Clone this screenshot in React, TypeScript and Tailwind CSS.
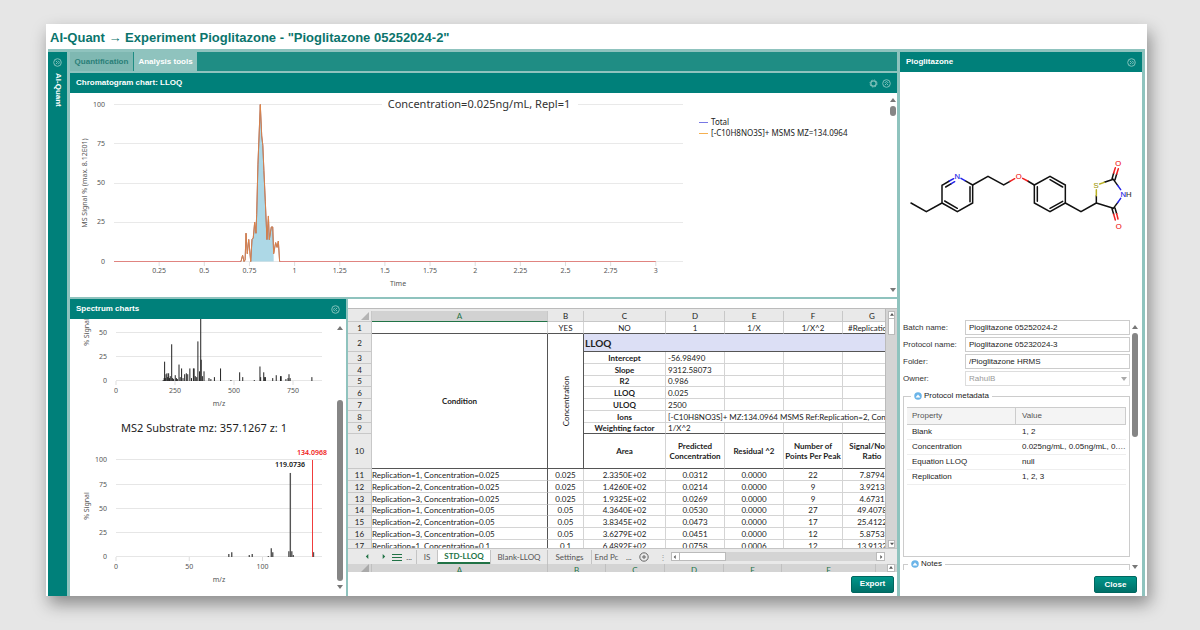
import { useState } from "react";
import type { ReactNode } from "react";
import clsx from "clsx";

type Point = [number, number];

const CHART_FONT = "font-['Noto_Sans',sans-serif]";

// time / signal % of the extracted ion trace
const TRACE: Point[] = [
  [0.703, 0], [0.712, 4], [0.72, 0], [0.726, 1], [0.731, 18], [0.738, 5],
  [0.746, 14], [0.757, 0], [0.764, 14], [0.771, 15], [0.779, 25], [0.786, 18],
  [0.79, 30], [0.797, 62], [0.81, 100], [0.818, 80], [0.824, 74], [0.83, 58],
  [0.838, 38], [0.847, 14], [0.855, 29], [0.86, 14], [0.871, 22], [0.879, 22],
  [0.884, 5], [0.895, 12], [0.903, 9], [0.91, 13], [0.917, 0],
];

const MS1_PEAKS: Point[] = [
  [200, 1], [204, 3], [206, 20], [209, 3], [212, 7], [216, 8], [219, 4], [223, 8], [227, 3],
  [230, 5], [236, 38], [240, 3], [244, 2], [251, 6], [256, 3], [260, 2], [267, 17], [272, 4],
  [278, 13], [284, 3], [291, 7], [298, 8], [304, 7], [313, 13], [320, 3], [328, 13], [331, 13],
  [336, 5], [342, 4], [347, 41], [354, 10], [359, 70], [361, 22], [366, 5], [373, 10],
  [394, 3], [402, 2], [417, 4], [443, 13], [487, 1], [524, 9], [537, 4], [586, 1],
  [610, 15], [613, 4], [626, 9], [630, 4], [633, 4], [664, 3], [679, 6], [697, 5],
  [700, 5], [720, 2], [729, 3], [733, 7], [738, 3], [830, 4],
];

const MS2_PEAKS: Point[] = [
  [77, 3], [79, 5], [91, 2], [93, 3], [104, 1], [106, 9], [107, 5],
  [118, 6], [119, 87], [120, 6], [121, 2], [134.8, 5],
];

const TIME_TICKS = [0.25, 0.5, 0.75, 1, 1.25, 1.5, 1.75, 2, 2.25, 2.5, 2.75, 3];

const FIT_ROWS = [
  { n: 3, h: "h-[12px]", label: "Intercept", value: "-56.98490" },
  { n: 4, h: "h-[12px]", label: "Slope", value: "9312.58073" },
  { n: 5, h: "h-[11px]", label: "R2", value: "0.986" },
  { n: 6, h: "h-[12px]", label: "LLOQ", value: "0.025" },
  { n: 7, h: "h-[12px]", label: "ULOQ", value: "2500" },
  {
    n: 8,
    h: "h-[12px]",
    label: "Ions",
    value: "[-C10H8NO3S]+ MZ:134.0964 MSMS Ref:Replication=2, Concentration=0.025",
  },
  { n: 9, h: "h-[11px]", label: "Weighting factor", value: "1/X^2" },
];

const DATA_ROWS = [
  { n: 11, h: "h-[12px]", cells: ["Replication=1, Concentration=0.025", "0.025", "2.3350E+02", "0.0312", "0.0000", "22", "7.8794"] },
  { n: 12, h: "h-[12px]", cells: ["Replication=2, Concentration=0.025", "0.025", "1.4260E+02", "0.0214", "0.0000", "9", "3.9213"] },
  { n: 13, h: "h-[12px]", cells: ["Replication=3, Concentration=0.025", "0.025", "1.9325E+02", "0.0269", "0.0000", "9", "4.6731"] },
  { n: 14, h: "h-[11px]", cells: ["Replication=1, Concentration=0.05", "0.05", "4.3640E+02", "0.0530", "0.0000", "27", "49.4078"] },
  { n: 15, h: "h-[12px]", cells: ["Replication=2, Concentration=0.05", "0.05", "3.8345E+02", "0.0473", "0.0000", "17", "25.4122"] },
  { n: 16, h: "h-[12px]", cells: ["Replication=3, Concentration=0.05", "0.05", "3.6279E+02", "0.0451", "0.0000", "12", "5.8753"] },
  { n: 17, h: "h-[12px]", cells: ["Replication=1, Concentration=0.1", "0.1", "6.4892E+02", "0.0758", "0.0006", "12", "13.9132"] },
];

const METADATA = [
  { property: "Blank", value: "1, 2" },
  { property: "Concentration", value: "0.025ng/mL, 0.05ng/mL, 0.1ng/mL" },
  { property: "Equation LLOQ", value: "null" },
  { property: "Replication", value: "1, 2, 3" },
];

function Triangle({ dir, className }: { dir: "up" | "down" | "left" | "right"; className?: string }) {
  const points = {
    up: "0,4 3,0 6,4",
    down: "0,1 6,1 3,5",
    left: "4,0 4,6 1,3",
    right: "2,0 5,3 2,6",
  };
  return (
    <svg viewBox="0 0 6 6" className={clsx("shrink-0", className ?? "size-[6px]")} aria-hidden="true">
      <polygon points={points[dir]} fill="currentColor" />
    </svg>
  );
}

function CircleIcon({ kind }: { kind: "left" | "right" | "up" }) {
  const turn = { left: "rotate-180", right: "", up: "-rotate-90" };
  return (
    <svg
      viewBox="0 0 18 18"
      className={clsx("size-[9px] text-[#7fc0ba]", turn[kind])}
      fill="none"
      stroke="currentColor"
      strokeWidth="2"
      aria-hidden="true"
    >
      <circle cx="9" cy="9" r="7.6" />
      <path d="M5.5 5.5 9 9l-3.500 3.500M10 5.500 13.500 9 10 12.500" />
    </svg>
  );
}

function GearIcon() {
  return (
    <svg viewBox="0 0 18 18" className="size-[9px] text-[#7fc0ba]" fill="none" stroke="currentColor" aria-hidden="true">
      <circle cx="9" cy="9" r="5.400" strokeWidth="2.600" />
      <circle cx="9" cy="9" r="7.200" strokeWidth="1.800" strokeDasharray="2.800 2.850" />
    </svg>
  );
}

function PanelHeader({ title, children }: { title: string; children?: ReactNode }) {
  return (
    <div className="flex h-5 shrink-0 items-center justify-between bg-[#00807a] pr-[6px] pl-[6px] text-[8px] font-bold text-white">
      <h2>{title}</h2>
      <div className="flex items-center gap-1">{children}</div>
    </div>
  );
}

function ScrollTrack({ thumb, className }: { thumb: string; className?: string }) {
  return (
    <div className={clsx("flex w-[6px] shrink-0 flex-col items-center gap-[2px] text-[#777]", className)}>
      <Triangle dir="up" />
      <div className={clsx("w-[6px] rounded-full bg-[#858585]", thumb)} />
      <Triangle dir="down" className="mt-auto size-[6px]" />
    </div>
  );
}

function Chromatogram() {
  const x = (t: number) => 44 + t * 180.6;
  const y = (v: number) => 168.5 - v * 1.57;
  const line = TRACE.map(([t, v]) => `${x(t)},${y(v)}`).join(" ");
  const area = TRACE.filter(([t]) => t >= 0.757 && t <= 0.884)
    .map(([t, v]) => `${x(t)},${y(v)}`)
    .join(" ");

  return (
    <svg width="816" height="204" className={clsx("shrink-0", CHART_FONT)} role="img" aria-label="Chromatogram">
      {[0, 25, 50, 75, 100].map((v) => (
        <g key={v}>
          <line x1="44" x2="613" y1={Math.floor(y(v)) + 0.5} y2={Math.floor(y(v)) + 0.5} stroke="#e9e9e9" />
          <text x="35" y={y(v) + 2} textAnchor="end" fontSize="7" fill="#555">
            {v}
          </text>
        </g>
      ))}
      {TIME_TICKS.map((t) => (
        <g key={t}>
          <line x1={x(t)} x2={x(t)} y1="169" y2="173" stroke="#ddd" />
          <text x={x(t)} y="180" textAnchor="middle" fontSize="7" fill="#555">
            {t}
          </text>
        </g>
      ))}
      <polygon points={`${x(0.757)},${y(0)} ${area} ${x(0.884)},${y(0)}`} fill="#add8e6" />
      <line x1={x(0)} x2={x(0.703)} y1={y(0)} y2={y(0)} stroke="#e08480" />
      <line x1={x(0.917)} x2={x(3)} y1={y(0)} y2={y(0)} stroke="#e08480" />
      <polyline points={line} fill="none" stroke="#8a5a6a" strokeWidth="1" />
      <polyline points={line} fill="none" stroke="#e88a44" strokeWidth="0.800" />
      <rect x="312" y="4" width="196" height="14" fill="#fff" />
      <text x="409" y="15" textAnchor="middle" fontSize="11" fill="#333">
        Concentration=0.025ng/mL, Repl=1
      </text>
      <text x="328" y="193" textAnchor="middle" fontSize="7" fill="#555">
        Time
      </text>
      <text transform="translate(17 90) rotate(-90)" textAnchor="middle" fontSize="7" fill="#555">
        MS Signal % (max. 8.12E01)
      </text>
      <line x1="629" x2="638" y1="29.500" y2="29.500" stroke="#7878e4" />
      <text x="641" y="32" fontSize="8" fill="#222">
        Total
      </text>
      <line x1="629" x2="638" y1="40.500" y2="40.500" stroke="#f5b050" />
      <text x="641" y="43" fontSize="8" fill="#222">
        [-C10H8NO3S]+ MSMS MZ=134.0964
      </text>
    </svg>
  );
}

type SpectrumProps = {
  peaks: Point[];
  base: number;
  perMz: number;
  xTicks: number[];
  yTicks: number[];
  labelY: number;
  peakWidth: number;
  peakColor: string;
};

function Spectrum({ peaks, base, perMz, xTicks, yTicks, labelY, peakWidth, peakColor }: SpectrumProps) {
  const x = (mz: number) => 46 + mz * perMz;
  const y = (v: number) => base - v * 0.966;
  return (
    <>
      {yTicks.map((v) => (
        <g key={v}>
          <line x1="46" x2="252" y1={Math.round(y(v)) - 0.5} y2={Math.round(y(v)) - 0.5} stroke="#e6e6e6" />
          <text x="37" y={y(v) + 2} textAnchor="end" fontSize="7" fill="#555">
            {v}
          </text>
        </g>
      ))}
      {xTicks.map((v) => (
        <g key={v}>
          <line x1={x(v)} x2={x(v)} y1={base} y2={base + 4} stroke="#ddd" />
          <text x={x(v)} y={base + 12} textAnchor="middle" fontSize="7" fill="#555">
            {v}
          </text>
        </g>
      ))}
      {peaks.map(([mz, v]) => (
        <line key={mz} x1={x(mz)} x2={x(mz)} y1={base} y2={y(v)} stroke={peakColor} strokeWidth={peakWidth} />
      ))}
      <text x="149" y={base + 25} textAnchor="middle" fontSize="7" fill="#555">
        m/z
      </text>
      <text transform={`translate(19 ${labelY}) rotate(-90)`} textAnchor="middle" fontSize="7" fill="#555">
        % Signal
      </text>
    </>
  );
}

function SpectrumCharts() {
  return (
    <svg width="264" height="277" className={clsx("shrink-0", CHART_FONT)} role="img" aria-label="Mass spectra">
      <Spectrum
        peaks={MS1_PEAKS}
        base={62}
        perMz={0.236}
        xTicks={[0, 250, 500, 750]}
        yTicks={[0, 25, 50]}
        labelY={13}
        peakWidth={1}
        peakColor="#222"
      />
      <text x="134" y="113" textAnchor="middle" fontSize="11" fill="#222">
        MS2 Substrate mz: 357.1267 z: 1
      </text>
      <Spectrum
        peaks={MS2_PEAKS}
        base={238}
        perMz={1.465}
        xTicks={[0, 50, 100]}
        yTicks={[0, 25, 50, 75, 100]}
        labelY={187}
        peakWidth={1.4}
        peakColor="#555"
      />
      <line x1="242.500" x2="242.500" y1="238" y2="141" stroke="#f03c3c" />
      <text x="242" y="136" textAnchor="middle" fontSize="7" fontWeight="600" fill="#f01818">
        134.0968
      </text>
      <text x="220" y="148" textAnchor="middle" fontSize="7" fontWeight="600" fill="#111">
        119.0736
      </text>
    </svg>
  );
}

function Molecule() {
  return (
    <svg
      viewBox="15 0 726 300"
      className="w-full font-['Liberation_Sans',sans-serif]"
      fill="none"
      stroke="#111"
      strokeWidth="4.500"
      strokeLinecap="round"
      role="img"
      aria-label="Pioglitazone structure"
    >
      {/* ethyl + pyridine */}
      <path d="M48 174 94 200 141 174M141 174V121M141 121 163 108M152 126 169 116M233 120 210 107M233 120V174L187 200 141 174M225 125V170M187 190 149 168" />
      <path d="M163 108 176 101M169 116 179 110M210 107 198 100" stroke="#2222e8" />
      {/* ethoxy linker */}
      <path d="M233 120 279 94 326 120 345 109M398 108 418 120" />
      <path d="M345 109 359 101M383 100 398 108" stroke="#f02020" />
      {/* benzene */}
      <path d="M418 120 465 94 511 120V174L465 200 418 174ZM427 125V169M465 104 503 126M503 169 465 190" />
      {/* methylene + thiazolidinedione */}
      <path d="M511 174 558 200 604 174M604 174V152M604 174 655 190M628 112 655 103M655 103 668 121M655 190 668 173M651 102 656 84M660 104 665 87M651 191 656 208M660 189 665 206" />
      <path d="M604 152V134M628 112 614 117" stroke="#b8b020" />
      <path d="M668 121 677 134M668 173 677 160" stroke="#2222e8" />
      <path d="M656 84 661 68M665 87 670 71M656 208 661 225M665 206 669 222" stroke="#f02020" />
      <g strokeWidth="0.400" fontSize="23" textAnchor="middle">
        <text x="187" y="102" fill="#2222e8" stroke="#2222e8">N</text>
        <text x="371" y="102" fill="#f02020" stroke="#f02020">O</text>
        <text x="603" y="130" fill="#a8a018" stroke="#a8a018">S</text>
        <text x="670" y="62" fill="#f02020" stroke="#f02020">O</text>
        <text x="671" y="251" fill="#f02020" stroke="#f02020">O</text>
        <text x="685" y="155" fill="#2222e8" stroke="#2222e8">N</text>
        <text x="701" y="155" fill="#333" stroke="#333">H</text>
      </g>
    </svg>
  );
}

function RowHead({ children }: { children: ReactNode }) {
  return (
    <th className="border-r border-b border-[#c8c8c8] bg-[#e9e9e9] p-0 text-center font-normal">{children}</th>
  );
}

function Sheet() {
  const light = "border-r border-b border-[#d4d4d4] p-0";
  return (
    <table className="w-[554px] shrink-0 table-fixed border-separate border-spacing-0 bg-white text-[8px] leading-[10px] whitespace-nowrap text-[#222]">
      <colgroup>
        <col className="w-[24px]" />
        <col className="w-[176px]" />
        <col className="w-[36px]" />
        <col className="w-[82px]" />
        <col className="w-[59px]" />
        <col className="w-[59px]" />
        <col className="w-[59px]" />
        <col className="w-[59px]" />
      </colgroup>
      <thead>
        <tr className="h-[11px] bg-[#e9e9e9]">
          <th className="border-r border-b border-[#c8c8c8] p-0">
            <svg viewBox="0 0 8 8" className="mr-[2px] ml-auto size-2" aria-hidden="true">
              <path d="M8 0V8H0Z" fill="#b4b4b4" />
            </svg>
          </th>
          {["A", "B", "C", "D", "E", "F", "G"].map((c) => (
            <th
              key={c}
              className={clsx(
                "border-r border-b p-0 font-normal",
                c === "A"
                  ? "border-r-[#c8c8c8] border-b-[#217346] bg-[#d2d2d2] text-[#217346]"
                  : "border-[#c8c8c8]"
              )}
            >
              {c}
            </th>
          ))}
        </tr>
      </thead>
      <tbody>
        <tr className="h-[12px] text-center">
          <RowHead>1</RowHead>
          {["", "YES", "NO", "1", "1/X", "1/X^2", "#Replications"].map((c, i) => (
            <td key={i} className="overflow-hidden border-r border-b border-r-[#d4d4d4] border-b-[#555] p-0">
              <div className={i === 6 ? "pl-[5px] text-left" : ""}>{c}</div>
            </td>
          ))}
        </tr>
        <tr className="h-[18px]">
          <RowHead>2</RowHead>
          <th rowSpan={9} className="border-r border-b border-[#555] p-0">
            Condition
          </th>
          <td rowSpan={9} className="border-r border-b border-[#555] p-0">
            <div className="flex justify-center">
              <span className="rotate-180 leading-[12px] [writing-mode:vertical-rl]">Concentration</span>
            </div>
          </td>
          <th colSpan={5} className="border-b border-[#555] bg-[#dcdff5] p-0 pl-px text-left text-[10px]">
            LLOQ
          </th>
        </tr>
        {FIT_ROWS.map((row) => {
          const last = row.n === 9;
          const cell = clsx("border-r border-b border-r-[#d4d4d4] p-0", last ? "border-b-[#555]" : "border-b-[#d4d4d4]");
          return (
            <tr key={row.n} className={row.h}>
              <RowHead>{row.n}</RowHead>
              <th className={cell}>{row.label}</th>
              {row.n === 8 ? (
                <td colSpan={4} className={clsx(cell, "overflow-hidden pl-[2px]")}>
                  {row.value}
                </td>
              ) : (
                <>
                  <td className={clsx(cell, "pl-[2px]")}>{row.value}</td>
                  <td className={cell} />
                  <td className={cell} />
                  <td className={cell} />
                </>
              )}
            </tr>
          );
        })}
        <tr className="h-[35px]">
          <RowHead>10</RowHead>
          {["Area", "Predicted\nConcentration", "Residual ^2", "Number of\nPoints Per Peak", "Signal/Noise\nRatio"].map((h) => (
            <th key={h} className="border-r border-b border-r-[#d4d4d4] border-b-[#555] p-0 whitespace-pre">
              {h}
            </th>
          ))}
        </tr>
        {DATA_ROWS.map((row) => (
          <tr key={row.n} className={row.h}>
            <RowHead>{row.n}</RowHead>
            {row.cells.map((c, i) => (
              <td key={i} className={clsx(light, i === 0 ? "border-r-[#555] text-left" : "text-center")}>
                {c}
              </td>
            ))}
          </tr>
        ))}
      </tbody>
    </table>
  );
}

function SheetTabs() {
  const [active, setActive] = useState("STD-LLOQ");
  const tabs = [
    { name: "IS", width: "w-[21px]" },
    { name: "STD-LLOQ", width: "w-[53px]" },
    { name: "Blank-LLOQ", width: "w-[57px]" },
    { name: "Settings", width: "w-[44px]" },
    { name: "End Pc", width: "w-[30px]" },
  ];
  return (
    <div className="flex h-[16px] shrink-0 items-center border-t border-[#c4c4c4] bg-[#e9e9e9] text-[8px] leading-[10px] text-[#555]">
      <div className="flex w-[68px] shrink-0 items-center justify-end pr-[4px] text-[#217346]">
        <Triangle dir="left" className="mr-[11px] size-[5px]" />
        <Triangle dir="right" className="mr-[6px] size-[5px]" />
        <svg viewBox="0 0 10 8" className="mr-[4px] h-2 w-[10px]" stroke="currentColor" aria-hidden="true">
          <path d="M0 1.500h10M0 4.500h10M0 7.500h10" />
        </svg>
        <span className="text-[#444]">...</span>
      </div>
      {tabs.map((tab) => (
        <button
          key={tab.name}
          type="button"
          onClick={() => setActive(tab.name)}
          className={clsx(
            "h-[14px] shrink-0 overflow-hidden border-l border-[#c4c4c4] text-center whitespace-nowrap",
            tab.width,
            active === tab.name && "border-b-2 border-b-[#217346] bg-white font-bold text-[#217346]"
          )}
        >
          {tab.name}
        </button>
      ))}
      <span className="ml-[5px] text-[#444]">...</span>
      <svg viewBox="0 0 10 10" className="ml-[7px] size-[10px]" fill="none" stroke="#666" aria-hidden="true">
        <circle cx="5" cy="5" r="4.200" />
        <path d="M5 3v4M3 5h4" />
      </svg>
      <span className="ml-[10px] w-[8px] text-[#999]">⋮</span>
      <div className="ml-[4px] mr-[12px] flex h-[9px] grow items-stretch bg-[#d4d4d4]">
        <span className="flex w-[9px] items-center justify-center border border-[#bbb] bg-white text-[#555]">
          <Triangle dir="left" className="size-[4px]" />
        </span>
        <span className="w-[46px] border border-l-0 border-[#bbb] bg-white" />
        <span className="ml-auto flex w-[9px] items-center justify-center border border-[#bbb] bg-white text-[#555]">
          <Triangle dir="right" className="size-[4px]" />
        </span>
      </div>
    </div>
  );
}

const NEXT_COLUMNS = [
  { name: "A", width: "w-[176px]" },
  { name: "B", width: "w-[58px]" },
  { name: "C", width: "w-[59px]" },
  { name: "D", width: "w-[59px]" },
  { name: "E", width: "w-[58px]" },
  { name: "F", width: "w-[94px]" },
];

function ScrollButton({ dir }: { dir: "up" | "down" }) {
  return (
    <span className="flex h-[8px] shrink-0 items-center justify-center border border-[#bbb] bg-white text-[#555]">
      <Triangle dir={dir} className="size-[4px]" />
    </span>
  );
}

function SheetPanel() {
  return (
    <section className="flex min-w-0 grow flex-col bg-white font-[Lato,'Noto_Sans',sans-serif]">
      <input aria-label="Formula" className="block h-[10px] w-full shrink-0 border-b border-[#bbb] bg-white px-1 text-[8px]" />
      <div className="flex h-[239px] bg-[#d4d4d4]">
        <div className="flex min-w-0 grow overflow-hidden bg-[#e9e9e9] pt-[2px]">
          <Sheet />
        </div>
        <div className="flex w-[12px] shrink-0 flex-col border-l border-[#bbb] px-[2px] pt-[2px]">
          <ScrollButton dir="up" />
          <div className="h-[16px] shrink-0 border border-t-0 border-[#bbb] bg-white" />
          <div className="mt-auto flex flex-col">
            <ScrollButton dir="down" />
          </div>
        </div>
      </div>
      <SheetTabs />
      <div className="flex h-[8px] shrink-0 overflow-hidden bg-[#d4d4d4] text-center text-[8px] leading-[12px] text-[#217346]">
        <div className="w-[24px] shrink-0 border-r border-[#c0c0c0]">
          <svg viewBox="0 0 8 8" className="mr-[2px] ml-auto size-2" aria-hidden="true">
            <path d="M8 0V8H0Z" fill="#aaa" />
          </svg>
        </div>
        {NEXT_COLUMNS.map((c) => (
          <div key={c.name} className={clsx("shrink-0 border-r border-[#c0c0c0]", c.width)}>
            {c.name}
          </div>
        ))}
        <div className="mr-[2px] ml-auto w-[8px]">
          <ScrollButton dir="up" />
        </div>
      </div>
      <div className="flex h-[24px] items-center justify-end pr-[3px] font-['Liberation_Sans',sans-serif]">
        <ActionButton>Export</ActionButton>
      </div>
    </section>
  );
}

function ActionButton({ children }: { children: ReactNode }) {
  return (
    <button
      type="button"
      className="h-[17px] w-[43px] rounded-[2px] border border-[#00665f] bg-linear-to-b from-[#00968a] to-[#007068] text-center text-[8px] font-bold text-white"
    >
      {children}
    </button>
  );
}

function Field({ id, label, value }: { id: string; label: string; value: string }) {
  return (
    <div className="flex items-center">
      <label htmlFor={id} className="w-[62px] shrink-0">
        {label}
      </label>
      <input
        id={id}
        defaultValue={value}
        className="h-[15px] min-w-0 grow border border-[#ccc] bg-white px-[3px] text-[8px] text-[#222]"
      />
    </div>
  );
}

function Legend({ children }: { children: ReactNode }) {
  return (
    <legend className="ml-[4px] flex items-center gap-[2px] px-[3px] text-[8px] leading-[10px] text-[#222]">
      <svg viewBox="0 0 16 16" className="size-[8px]" aria-hidden="true">
        <circle cx="8" cy="8" r="7.500" fill="#6ab4e8" />
        <path d="M4 10.500 8 5.500l4 5z" fill="#fff" stroke="#fff" strokeLinejoin="round" />
      </svg>
      {children}
    </legend>
  );
}

function DetailsPanel() {
  return (
    <aside className="flex w-[242px] shrink-0 flex-col bg-white">
      <PanelHeader title="Pioglitazone">
        <CircleIcon kind="right" />
      </PanelHeader>
      <div className="pt-[73px] pb-[75px]">
        <Molecule />
      </div>
      <div className="flex h-[250px] pr-[4px] pl-[3px]">
        <form className="flex min-w-0 grow flex-col overflow-hidden text-[8px] leading-[10px] text-[#333]">
          <div className="flex flex-col gap-[2px]">
            <Field id="batch" label="Batch name:" value="Pioglitazone 05252024-2" />
            <Field id="protocol" label="Protocol name:" value="Pioglitazone 05232024-3" />
            <Field id="folder" label="Folder:" value="/Pioglitazone HRMS" />
            <div className="flex items-center">
              <label htmlFor="owner" className="w-[62px] shrink-0">
                Owner:
              </label>
              <div className="relative flex grow">
                <select
                  id="owner"
                  disabled
                  className="h-[15px] grow appearance-none border border-[#ddd] bg-white px-[3px] text-[8px] text-[#999] opacity-100"
                >
                  <option>RahulB</option>
                </select>
                <Triangle dir="down" className="absolute top-[5px] right-[3px] size-[6px] text-[#aaa]" />
              </div>
            </div>
          </div>
          <fieldset className="mt-[5px] h-[166px] shrink-0 border border-[#ccc] px-[3px]">
            <Legend>Protocol metadata</Legend>
            <table className="mt-[6px] w-full table-fixed border-separate border-spacing-0 text-left text-[#222]">
              <thead>
                <tr className="h-[18px] bg-[#f4f4f4] text-[#555]">
                  <th className="w-[109px] border-y border-r border-[#ccc] p-0 pl-[5px] font-normal">Property</th>
                  <th className="border-y border-r border-[#ccc] p-0 pl-[6px] font-normal">Value</th>
                </tr>
              </thead>
              <tbody>
                {METADATA.map((row) => (
                  <tr key={row.property} className="h-[15px]">
                    <td className="border-b border-[#eee] p-0 pl-[5px]">{row.property}</td>
                    <td className="truncate border-b border-[#eee] p-0 pl-[6px]">{row.value}</td>
                  </tr>
                ))}
              </tbody>
            </table>
          </fieldset>
          <fieldset className="mt-[2px] h-[30px] shrink-0 border border-[#ccc]">
            <Legend>Notes</Legend>
          </fieldset>
        </form>
        <ScrollTrack thumb="h-[104px]" className="ml-[2px] pt-[5px]" />
      </div>
      <div className="flex h-[26px] items-center justify-end pt-[3px] pr-[5px]">
        <ActionButton>Close</ActionButton>
      </div>
    </aside>
  );
}

export default function App() {
  const [tab, setTab] = useState("Analysis tools");

  return (
    <div className="min-h-screen bg-[#e6e6e6] pt-6 pr-[53px] pb-[34px] pl-[46px] font-['Liberation_Sans',sans-serif]">
      <main className="bg-white px-[2px] shadow-[3px_8px_16px_rgba(0,0,0,0.4)]">
        <h1 className="flex h-[25px] items-center pt-[3px] pl-[2px] text-[13px] font-bold whitespace-pre text-[#0b746c]">
          AI-Quant → Experiment Pioglitazone - "Pioglitazone 05252024-2"
        </h1>
        <div className="flex gap-[3px] bg-[#8fc3be] pt-[3px] pr-[3px]">
          <nav className="flex w-[19px] shrink-0 flex-col items-center gap-[6px] bg-[#00807a] pt-[6px]">
            <CircleIcon kind="right" />
            <span className="text-[8px] leading-[12px] font-bold text-white [writing-mode:vertical-rl]">AI-Quant</span>
          </nav>

          <div className="flex min-w-0 grow flex-col gap-[2px]">
            <div className="flex h-[19px] shrink-0 gap-px bg-[#1f8d84]">
              {["Quantification", "Analysis tools"].map((name) => (
                <button
                  key={name}
                  type="button"
                  onClick={() => setTab(name)}
                  className={clsx(
                    "w-[63px] text-center text-[8px] font-bold whitespace-nowrap",
                    tab === name ? "bg-[#8fc3be] text-white" : "bg-[#7fb8b2] text-[#2a7f78]"
                  )}
                >
                  {name}
                </button>
              ))}
            </div>

            <section className="bg-white">
              <PanelHeader title="Chromatogram chart: LLOQ">
                <GearIcon />
                <CircleIcon kind="up" />
              </PanelHeader>
              <div className="flex h-[204px] justify-between overflow-hidden pr-px">
                <Chromatogram />
                <ScrollTrack thumb="h-[10px]" className="pt-[5px] pb-[4px]" />
              </div>
            </section>

            <div className="flex grow gap-[2px]">
              <section className="flex w-[276px] shrink-0 flex-col bg-white">
                <PanelHeader title="Spectrum charts">
                  <CircleIcon kind="left" />
                </PanelHeader>
                <div className="flex grow justify-between pr-[3px]">
                  <SpectrumCharts />
                  <div className="flex w-[6px] shrink-0 flex-col items-center justify-between pt-[7px] pb-[6px] text-[#777]">
                    <Triangle dir="up" />
                    <div className="flex flex-col items-center gap-[3px]">
                      <div className="h-[181px] w-[6px] rounded-full bg-[#858585]" />
                      <Triangle dir="down" />
                    </div>
                  </div>
                </div>
              </section>
              <SheetPanel />
            </div>
          </div>

          <DetailsPanel />
        </div>
      </main>
    </div>
  );
}
